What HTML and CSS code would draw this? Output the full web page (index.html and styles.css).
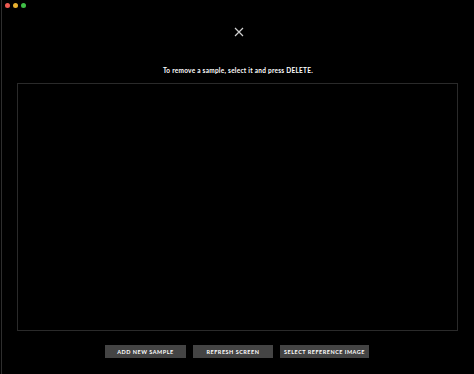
FILE: index.html
```html
<!DOCTYPE html>
<html lang="en">
<head>
    <meta charset="UTF-8">
    <title>Samples</title>
    <link rel="stylesheet" href="styles.css">
</head>
<body>
    <div class="window">
        <div class="titlebar">
            <span class="light red"></span>
            <span class="light yellow"></span>
            <span class="light green"></span>
        </div>
        <div class="content">
            <button class="close" aria-label="Close">
                <svg width="10" height="10" viewBox="0 0 10 10">
                    <path d="M1 1 L9 9 M9 1 L1 9" stroke="#d0d0d0" stroke-width="1.2" fill="none"/>
                </svg>
            </button>
            <p class="hint">To remove a sample, select it and press DELETE.</p>
            <div class="stage"></div>
            <div class="actions">
                <button class="btn btn-add">ADD NEW SAMPLE</button>
                <button class="btn btn-refresh">REFRESH SCREEN</button>
                <button class="btn btn-ref">SELECT REFERENCE IMAGE</button>
            </div>
        </div>
    </div>
</body>
</html>
```

FILE: styles.css
```css
html, body {
    margin: 0;
    background-color: #000;
    height: 100%;
}
.window {
    height: 374px;
    border-left: 1px solid #2e2e2e;
    margin-left: 1px;
    font-family: Lato, "Open Sans", sans-serif;
    color: #fff;
}
.titlebar {
    display: flex;
    gap: 3px;
    padding: 3px 0 0 3px;
    height: 8px;
}
.light {
    width: 5px;
    height: 5px;
    border-radius: 50%;
}
.red { background-color: #ee5a52; }
.yellow { background-color: #e8b130; }
.green { background-color: #3fbf46; }
.content {
    display: flex;
    flex-direction: column;
    align-items: center;
}
.close {
    margin-top: 15px;
    width: 12px;
    height: 12px;
    padding: 0 0 0 1px;
    border: none;
    background: none;
    display: flex;
    align-items: center;
    justify-content: center;
}
.hint {
    margin: 29px 0 0 0;
    font-size: 6.5px;
    font-weight: bold;
    letter-spacing: 0.25px;
    line-height: 8px;
}
.stage {
    margin: 8px 0 0 -2px;
    width: 439px;
    height: 246px;
    border: 1px solid #2a2a2a;
}
.actions {
    display: flex;
    gap: 7px;
    margin: 14px 0 0 -2px;
}
.btn {
    height: 13px;
    padding: 0;
    border: none;
    background-color: #444;
    color: #fff;
    font-family: Lato, sans-serif;
    font-size: 5.5px;
    font-weight: bold;
    letter-spacing: 0.5px;
}
.btn-add { width: 81px; }
.btn-refresh { width: 80px; }
.btn-ref { width: 89px; }
```
